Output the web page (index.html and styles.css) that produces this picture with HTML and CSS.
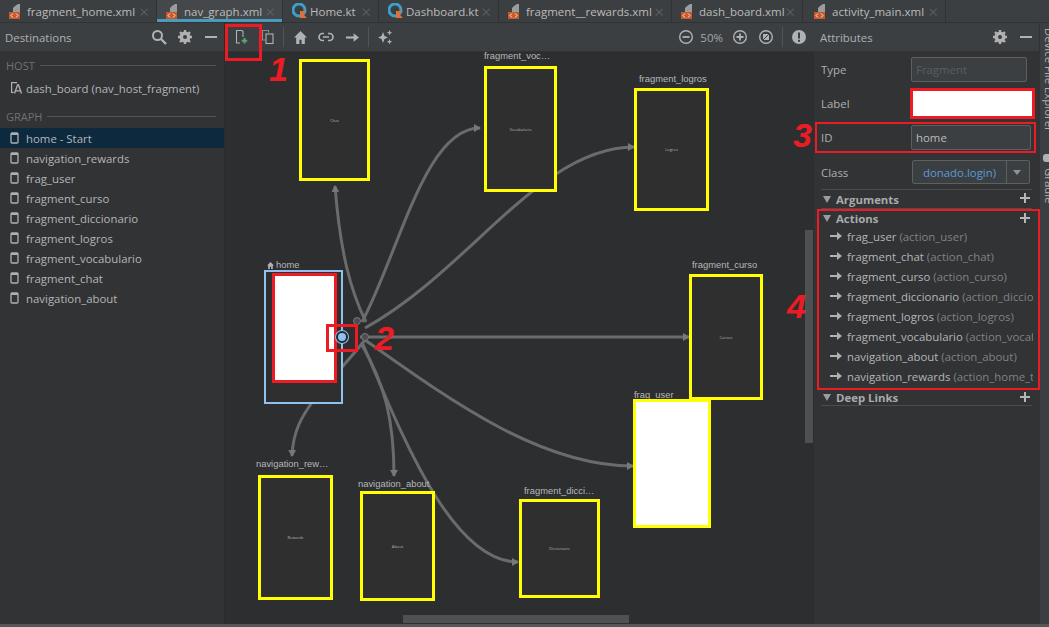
FILE: index.html
```html
<!DOCTYPE html>
<html lang="en">
<head>
    <meta charset="UTF-8">
    <title>nav_graph.xml</title>
    <link rel="stylesheet" href="styles.css">
</head>
<body>
    <svg class="icon-defs" width="0" height="0">
        <defs>
            <symbol id="xml" viewBox="0 0 16 16">
                <path d="M6 3l3-2h2v8H4V5z" fill="#9a9c9e"/>
                <rect x="0" y="9" width="11" height="7" fill="#c75a28"/>
                <path d="M4 10.500l-2 2 2 2M7 10.500l2 2-2 2" fill="none" stroke="#eee" stroke-width="1"/>
            </symbol>
            <symbol id="kt" viewBox="0 0 16 16">
                <circle cx="7" cy="7" r="6" fill="none" stroke="#3d9fc9" stroke-width="3"/>
                <path d="M8 15V8h7l-3.500 3.500L15 15z" fill="#e0703a"/>
            </symbol>
            <symbol id="screen" viewBox="0 0 10 12">
                <rect x="1" y="1" width="7" height="10" rx="1" fill="none" stroke="#aeb0b2" stroke-width="1.300"/>
                <rect x="1" y="1" width="7" height="2" fill="#aeb0b2"/>
            </symbol>
            <symbol id="gear" viewBox="0 0 16 16">
                <circle cx="8" cy="8" r="4" fill="none" stroke="#afb1b3" stroke-width="3"/>
                <path d="M8 1v14M1 8h14M3 3l10 10M13 3L3 13" stroke="#afb1b3" stroke-width="2.400"/>
                <circle cx="8" cy="8" r="2" fill="#3c3f41"/>
            </symbol>
            <symbol id="arrow" viewBox="0 0 12 10">
                <path d="M0 5h8" stroke="#afb1b3" stroke-width="2"/>
                <path d="M7 1l5 4-5 4z" fill="#afb1b3"/>
            </symbol>
            <symbol id="house" viewBox="0 0 12 12">
                <path d="M6 0l6 6h-2v6H7V8H5v4H2V6H0z" fill="#afb1b3"/>
            </symbol>
        </defs>
    </svg>

    <div class="tabs">
        <div class="tab"><svg class="tab-icon"><use href="#xml"/></svg>fragment_home.xml<span class="tab-close">×</span></div>
        <div class="tab active"><svg class="tab-icon"><use href="#xml"/></svg>nav_graph.xml<span class="tab-close">×</span></div>
        <div class="tab"><svg class="tab-icon"><use href="#kt"/></svg>Home.kt<span class="tab-close">×</span></div>
        <div class="tab"><svg class="tab-icon"><use href="#kt"/></svg>Dashboard.kt<span class="tab-close">×</span></div>
        <div class="tab"><svg class="tab-icon"><use href="#xml"/></svg>fragment__rewards.xml<span class="tab-close">×</span></div>
        <div class="tab"><svg class="tab-icon"><use href="#xml"/></svg>dash_board.xml<span class="tab-close">×</span></div>
        <div class="tab"><svg class="tab-icon"><use href="#xml"/></svg>activity_main.xml<span class="tab-close">×</span></div>
    </div>

    <div class="main">
        <aside class="destinations">
            <div class="panel-header">
                <span class="panel-title">Destinations</span>
                <div class="panel-tools">
                    <svg class="tool" viewBox="0 0 16 16"><circle cx="6.500" cy="6.500" r="4.500" fill="none" stroke="#afb1b3" stroke-width="2"/><path d="M10 10l5 5" stroke="#afb1b3" stroke-width="2.400"/></svg>
                    <svg class="tool"><use href="#gear"/></svg>
                    <svg class="tool" viewBox="0 0 16 16"><path d="M2 8h12" stroke="#afb1b3" stroke-width="2"/></svg>
                </div>
            </div>
            <div class="section-head host-head"><span>HOST</span><i></i></div>
            <div class="dest-row host-row">
                <svg class="host-icon" viewBox="0 0 12 12"><path d="M6 .6H.6v9.800h2" fill="none" stroke="#aeb0b2" stroke-width="1.200"/><path d="M3.500 11.500L6.500 3h1l3 8.500M4.800 8.800h4.500" fill="none" stroke="#aeb0b2" stroke-width="1.300"/></svg>
                dash_board (nav_host_fragment)
            </div>
            <div class="section-head graph-head"><span>GRAPH</span><i></i></div>
            <div class="dest-row selected"><svg class="row-icon"><use href="#screen"/></svg>home - Start</div>
            <div class="dest-row"><svg class="row-icon"><use href="#screen"/></svg>navigation_rewards</div>
            <div class="dest-row"><svg class="row-icon"><use href="#screen"/></svg>frag_user</div>
            <div class="dest-row"><svg class="row-icon"><use href="#screen"/></svg>fragment_curso</div>
            <div class="dest-row"><svg class="row-icon"><use href="#screen"/></svg>fragment_diccionario</div>
            <div class="dest-row"><svg class="row-icon"><use href="#screen"/></svg>fragment_logros</div>
            <div class="dest-row"><svg class="row-icon"><use href="#screen"/></svg>fragment_vocabulario</div>
            <div class="dest-row"><svg class="row-icon"><use href="#screen"/></svg>fragment_chat</div>
            <div class="dest-row"><svg class="row-icon"><use href="#screen"/></svg>navigation_about</div>
        </aside>

        <section class="editor">
            <div class="toolbar">
                <div class="tool-group">
                    <svg class="tool" viewBox="0 0 16 16"><path d="M7 14H3.500V1.500H9l1 1V8" fill="none" stroke="#afb1b3" stroke-width="1.100"/><path d="M11.500 9v5.500M8.800 11.800h5.400" stroke="#59a869" stroke-width="2"/></svg>
                    <svg class="tool" viewBox="0 0 16 16"><path d="M9.500 3.500V1.500h-6v9.500h3" fill="none" stroke="#8a8c8e" stroke-width="1.100"/><rect x="7" y="5" width="7" height="9.500" fill="none" stroke="#afb1b3" stroke-width="1.100"/></svg>
                    <i class="tool-sep"></i>
                    <svg class="tool tool-narrow"><use href="#house"/></svg>
                    <svg class="tool" viewBox="0 0 16 16"><path d="M6 4.500H4.500a3.500 3.500 0 0 0 0 7H6M10 4.500h1.500a3.500 3.500 0 0 1 0 7H10M5 8h6" fill="none" stroke="#afb1b3" stroke-width="1.700"/></svg>
                    <svg class="tool tool-narrow"><use href="#arrow"/></svg>
                    <i class="tool-sep"></i>
                    <svg class="tool" viewBox="0 0 16 16"><path d="M6 3l1.500 4L11 8.500 7.500 10 6 14l-1.500-4L1 8.500 4.500 7zM12.500 1l.8 2 2 .8-2 .8-.8 2-.8-2-2-.8 2-.8zM12.500 10l.8 2 2 .8-2 .8-.8 2-.8-2-2-.8 2-.8z" fill="#afb1b3"/></svg>
                </div>
                <div class="tool-group">
                    <svg class="tool" viewBox="0 0 16 16"><circle cx="8" cy="8" r="6.300" fill="none" stroke="#afb1b3" stroke-width="1.400"/><path d="M4.500 8h7" stroke="#afb1b3" stroke-width="1.800"/></svg>
                    <span class="zoom-value">50%</span>
                    <svg class="tool" viewBox="0 0 16 16"><circle cx="8" cy="8" r="6.300" fill="none" stroke="#afb1b3" stroke-width="1.400"/><path d="M4.500 8h7M8 4.500v7" stroke="#afb1b3" stroke-width="1.800"/></svg>
                    <svg class="tool" viewBox="0 0 16 16"><circle cx="8" cy="8" r="6.300" fill="none" stroke="#afb1b3" stroke-width="1.400"/><path d="M5 5h6v6H5z" fill="#afb1b3"/><path d="M4.500 11.500l7-7" stroke="#3c3f41" stroke-width="1"/></svg>
                    <i class="tool-sep"></i>
                    <svg class="tool" viewBox="0 0 16 16"><circle cx="8" cy="8" r="7" fill="#afb1b3"/><path d="M8 3.500v6M8 10.800v2" stroke="#3c3f41" stroke-width="2"/></svg>
                </div>
            </div>

            <div class="canvas">
                <svg class="edges" viewBox="225 52 589 575">
                    <defs>
                        <marker id="head" markerWidth="7" markerHeight="8" refX="6" refY="4" orient="auto" markerUnits="userSpaceOnUse"><path d="M0 0l7 4-7 4z" fill="#77787a"/></marker>
                    </defs>
                    <g fill="none" stroke="#6a6b6d" stroke-width="3" marker-end="url(#head)">
                        <path d="M366 322C350 290 340 250 335 186"/>
                        <path d="M362 322C400 250 425 128 480 128"/>
                        <path d="M365 328C470 270 540 147 634 147"/>
                        <path d="M360 337H689"/>
                        <path d="M365 340C450 400 540 466 633 466"/>
                        <path d="M362 342C400 430 450 562 518 562"/>
                        <path d="M362 345C385 385 394 420 394 476"/>
                        <path d="M365 340C345 365 325 385 313 401C303 415 293 430 292 456"/>
                    </g>
                    <g fill="#4b4c4e" stroke="#77787a">
                        <circle cx="357" cy="321" r="3.500"/>
                        <circle cx="365" cy="337" r="3.500"/>
                    </g>
                </svg>

                <div class="node node-chat"><span class="node-text">Chat</span></div>
                <span class="node-label label-voc">fragment_voc…</span>
                <div class="node node-voc"><span class="node-text">Vocabulario</span></div>
                <span class="node-label label-logros">fragment_logros</span>
                <div class="node node-logros"><span class="node-text">Logros</span></div>
                <span class="node-label label-curso">fragment_curso</span>
                <div class="node node-curso"><span class="node-text">Cursos</span></div>
                <span class="node-label label-user">frag_user</span>
                <div class="node node-user"></div>
                <span class="node-label label-rewards">navigation_rew…</span>
                <div class="node node-rewards"><span class="node-text">Rewards</span></div>
                <span class="node-label label-about">navigation_about</span>
                <div class="node node-about"><span class="node-text">About</span></div>
                <span class="node-label label-dicc">fragment_dicci…</span>
                <div class="node node-dicc"><span class="node-text">Diccionario</span></div>

                <span class="node-label label-home"><svg class="home-glyph"><use href="#house"/></svg>home</span>
                <div class="home-frame"></div>
                <div class="home-screen"></div>
                <div class="handle-mark"></div>
                <div class="handle"></div>

                <div class="scroll-v"></div>
                <div class="scroll-h"></div>
            </div>
        </section>

        <aside class="attributes">
            <div class="panel-header attr-header">
                <span class="panel-title">Attributes</span>
                <div class="panel-tools">
                    <svg class="tool"><use href="#gear"/></svg>
                    <svg class="tool" viewBox="0 0 16 16"><path d="M2 8h12" stroke="#afb1b3" stroke-width="2"/></svg>
                </div>
            </div>
            <div class="attr-form">
                <div class="attr-row"><label>Type</label><div class="field disabled">Fragment</div></div>
                <div class="attr-row"><label>Label</label><div class="field blank"></div></div>
                <div class="attr-row id-row"><label>ID</label><div class="field">home</div></div>
                <div class="attr-row class-row"><label>Class</label><div class="field combo"><span class="combo-value">donado.login)</span><span class="combo-arrow"></span></div></div>
            </div>
            <div class="group-head args-head"><span class="caret"></span>Arguments<span class="plus"></span></div>
            <div class="actions-box">
                <div class="group-head"><span class="caret"></span>Actions<span class="plus"></span></div>
                <div class="action"><svg class="action-arrow"><use href="#arrow"/></svg><span class="action-text">frag_user <em>(action_user)</em></span></div>
                <div class="action"><svg class="action-arrow"><use href="#arrow"/></svg><span class="action-text">fragment_chat <em>(action_chat)</em></span></div>
                <div class="action"><svg class="action-arrow"><use href="#arrow"/></svg><span class="action-text">fragment_curso <em>(action_curso)</em></span></div>
                <div class="action"><svg class="action-arrow"><use href="#arrow"/></svg><span class="action-text">fragment_diccionario <em>(action_diccionario)</em></span></div>
                <div class="action"><svg class="action-arrow"><use href="#arrow"/></svg><span class="action-text">fragment_logros <em>(action_logros)</em></span></div>
                <div class="action"><svg class="action-arrow"><use href="#arrow"/></svg><span class="action-text">fragment_vocabulario <em>(action_vocabulario)</em></span></div>
                <div class="action"><svg class="action-arrow"><use href="#arrow"/></svg><span class="action-text">navigation_about <em>(action_about)</em></span></div>
                <div class="action"><svg class="action-arrow"><use href="#arrow"/></svg><span class="action-text">navigation_rewards <em>(action_home_to_rewards)</em></span></div>
            </div>
            <div class="group-head deep-head"><span class="caret"></span>Deep Links<span class="plus"></span></div>
        </aside>

        <div class="side-strip">
            <span class="side-text">Device File Explorer</span>
            <i class="gradle-icon"></i>
            <span class="side-text gradle">Gradle</span>
        </div>
    </div>
    <div class="bottom-line"></div>

    <!-- red annotations drawn over the screenshot -->
    <div class="mark mark-add"></div>
    <span class="mark-num num-1">1</span>
    <span class="mark-num num-2">2</span>
    <span class="mark-num num-3">3</span>
    <span class="mark-num num-4">4</span>
</body>
</html>
```

FILE: styles.css
```css
* {
    box-sizing: border-box;
}

html, body {
    height: 100%;
}

body {
    margin: 0;
    position: relative;
    display: flex;
    flex-direction: column;
    overflow: hidden;
    background-color: #313335;
    color: #bbbbbb;
    font-family: "Open Sans", "Noto Sans", sans-serif;
    font-size: 11.400px;
}

.icon-defs {
    position: absolute;
}

/* tab strip */
.tabs {
    display: flex;
    height: 23px;
    flex: none;
    background-color: #3c3f41;
    border-bottom: 1px solid #323232;
}

.tab {
    display: flex;
    align-items: center;
    height: 22px;
    padding-left: 9px;
    border-right: 1px solid #323232;
    font-size: 11.500px;
    color: #bbbbbb;
    white-space: nowrap;
}

.tab:nth-child(1) { width: 157px; }
.tab:nth-child(2) { width: 126px; }
.tab:nth-child(3) { width: 96px; }
.tab:nth-child(4) { width: 120px; }
.tab:nth-child(5) { width: 173px; }
.tab:nth-child(6) { width: 131px; }
.tab:nth-child(7) { width: 143px; padding-left: 11px; }

.tab.active {
    background-color: #44484a;
    box-shadow: inset 0 -3px 0 #4a9cbd;
}

.tab-icon {
    width: 16px;
    height: 16px;
    margin-right: 2px;
    flex: none;
}

.tab-close {
    margin-left: auto;
    margin-right: 7px;
    color: #66686a;
    font-size: 17px;
    font-weight: 300;
    line-height: 1;
}

/* main area */
.main {
    flex: 1;
    display: flex;
    min-height: 0;
}

.panel-header {
    display: flex;
    align-items: center;
    justify-content: space-between;
    height: 29px;
    padding: 0 5px;
    background-color: #3c3f41;
    border-bottom: 1px solid #323232;
}

.panel-title {
    color: #aeb0b2;
}

.panel-tools {
    display: flex;
    gap: 10px;
    align-items: center;
}

.tool {
    width: 16px;
    height: 16px;
    flex: none;
}

.tool-narrow {
    width: 13px;
    height: 13px;
    margin: 0 1.500px;
}

/* destinations list */
.destinations {
    width: 225px;
    flex: none;
    border-right: 1px solid #2b2b2b;
    background-color: #313335;
}

.section-head {
    display: flex;
    align-items: center;
    gap: 5px;
    height: 18px;
    padding: 0 8px 0 6px;
    color: #6f7173;
    font-size: 11px;
}

.section-head i {
    flex: 1;
    height: 1px;
    background-color: #515355;
}

.host-head {
    margin-top: 4px;
}

.graph-head {
    margin: 8px 0 3px;
}

.dest-row {
    display: flex;
    align-items: center;
    height: 20px;
    padding-left: 26px;
    position: relative;
    color: #b4b6b8;
    white-space: nowrap;
}

.host-row {
    margin-top: 3px;
    height: 22px;
}

.selected {
    background-color: #0d293e;
}

.row-icon {
    position: absolute;
    left: 10px;
    top: 4px;
    width: 10px;
    height: 12px;
}

.host-icon {
    position: absolute;
    left: 11px;
    top: 5px;
    width: 12px;
    height: 12px;
}

/* toolbar */
.editor {
    flex: 1;
    display: flex;
    flex-direction: column;
    min-width: 0;
}

.toolbar {
    display: flex;
    align-items: center;
    justify-content: space-between;
    height: 29px;
    flex: none;
    padding: 0 7px 0 8px;
    background-color: #3c3f41;
    border-bottom: 1px solid #323232;
}

.tool-group {
    display: flex;
    align-items: center;
    gap: 10px;
}

.tool-sep {
    width: 1px;
    height: 20px;
    margin: 0 -2px;
    background-color: #515355;
}

.zoom-value {
    font-size: 11.500px;
    color: #a5a7a9;
    margin: 0 -1px 0 -4px;
}

/* graph canvas */
.canvas {
    position: relative;
    flex: 1;
    background-color: #2d2e30;
}

.edges {
    position: absolute;
    left: 0;
    top: 0;
    width: 589px;
    height: 575px;
}

.node {
    position: absolute;
    display: flex;
    align-items: center;
    justify-content: center;
    border: 3px solid #ffff00;
    background-color: #2f2f2f;
}

.node-text {
    font-size: 4px;
    color: #b5b5b5;
}

.node-chat { left: 74px; top: 7px; width: 71px; height: 122px; }
.node-voc { left: 259px; top: 14px; width: 73px; height: 126px; }
.node-logros { left: 409px; top: 36px; width: 75px; height: 123px; }
.node-curso { left: 464px; top: 222px; width: 74px; height: 126px; }
.node-user { left: 408px; top: 347px; width: 78px; height: 129px; background-color: #ffffff; }
.node-rewards { left: 33px; top: 423px; width: 75px; height: 125px; }
.node-about { left: 135px; top: 439px; width: 75px; height: 110px; }
.node-dicc { left: 294px; top: 447px; width: 81px; height: 99px; }

.node-label {
    position: absolute;
    font-family: "Liberation Sans", Arial, sans-serif;
    font-size: 9.400px;
    line-height: 12px;
    color: #b7b8b9;
    white-space: nowrap;
}

.label-voc { left: 259px; top: -2px; }
.label-logros { left: 414px; top: 21px; }
.label-curso { left: 467px; top: 207px; }
.label-user { left: 409px; top: 337px; }
.label-rewards { left: 31px; top: 406px; }
.label-about { left: 133px; top: 426px; }
.label-dicc { left: 299px; top: 433px; }
.label-home { left: 42px; top: 207px; display: flex; align-items: center; gap: 2px; }

.home-glyph {
    width: 7px;
    height: 7px;
}

.home-frame {
    position: absolute;
    left: 39px;
    top: 218px;
    width: 79px;
    height: 134px;
    border: 2px solid #8fc2f0;
    background-color: #2f2f2f;
}

.home-screen {
    position: absolute;
    left: 47px;
    top: 221px;
    width: 65px;
    height: 110px;
    border: 3px solid #ed1c24;
    background-color: #ffffff;
}

.handle-mark {
    position: absolute;
    left: 101px;
    top: 272px;
    width: 32px;
    height: 28px;
    border: 3px solid #ed1c24;
}

.handle {
    position: absolute;
    left: 111px;
    top: 279px;
    width: 12px;
    height: 12px;
    border-radius: 50%;
    background-color: #8fc2f0;
    border: 2px solid #23282c;
    box-shadow: 0 0 0 1px #8fc2f0;
}

.scroll-v {
    position: absolute;
    left: 580px;
    top: 178px;
    width: 8px;
    height: 213px;
    background-color: #4f5052;
}

.scroll-h {
    position: absolute;
    left: 178px;
    top: 563px;
    width: 226px;
    height: 8px;
    background-color: #4f5052;
}

/* attributes panel */
.attributes {
    width: 225px;
    flex: none;
    background-color: #313335;
    position: relative;
    z-index: 1;
}

.attr-header {
    padding-left: 6px;
}

.attr-row {
    display: flex;
    align-items: center;
    height: 34px;
    padding-left: 7px;
}

.attr-row label {
    width: 90px;
    flex: none;
    color: #aeb0b2;
}

.field {
    display: flex;
    align-items: center;
    width: 116px;
    height: 25px;
    padding-left: 4px;
    border: 1px solid #5e6060;
    border-radius: 2px;
    background-color: #3c3f41;
    color: #bbbbbb;
}

.field.disabled {
    color: #5b5d5f;
}

.field.blank {
    width: 125px;
    height: 31px;
    margin-left: -1px;
    border: 3px solid #ed1c24;
    border-radius: 0;
    background-color: #ffffff;
}

.id-row {
    width: 221px;
    height: 31px;
    margin: 2px 0 0 1px;
    padding-left: 4px;
    border: 2px solid #ed1c24;
}

.id-row .field {
    width: 120px;
}

.class-row {
    margin-top: 2px;
    height: 34px;
}

.combo {
    margin-left: 1px;
    width: 118px;
    height: 24px;
    padding: 0;
}

.combo-value {
    flex: 1;
    text-align: center;
    color: #5a9bd8;
}

.combo-arrow {
    width: 23px;
    height: 100%;
    position: relative;
    border-left: 1px solid #5e6060;
}

.combo-arrow::after {
    content: "";
    position: absolute;
    left: 6px;
    top: 9px;
    border-left: 4px solid transparent;
    border-right: 4px solid transparent;
    border-top: 5px solid #8f9193;
}

.group-head {
    position: relative;
    display: flex;
    align-items: center;
    height: 16px;
    margin: 0 7px;
    border-bottom: 1px solid #4a4c4e;
    font-weight: 700;
    color: #a9abad;
}

.args-head {
    height: 20px;
    border-top: 1px solid #4a4c4e;
}

.caret {
    width: 0;
    height: 0;
    margin: 0 5px 0 2px;
    border-left: 4px solid transparent;
    border-right: 4px solid transparent;
    border-top: 7px solid #9a9c9e;
}

.plus {
    position: absolute;
    right: 2px;
    top: 50%;
    width: 10px;
    height: 10px;
    margin-top: -6px;
    background:
        linear-gradient(#b5b7b9, #b5b7b9) center / 10px 2px no-repeat,
        linear-gradient(#b5b7b9, #b5b7b9) center / 2px 10px no-repeat;
}

.actions-box {
    width: 223px;
    height: 181px;
    margin-left: 3px;
    border: 2px solid #ed1c24;
}

.actions-box .group-head {
    height: 15px;
    margin: 0 0 0 2px;
    border-bottom: none;
}

.actions-box .plus {
    right: 8px;
}

.action {
    display: flex;
    align-items: center;
    height: 20px;
    padding-left: 11px;
    color: #b4b6b8;
    white-space: nowrap;
    overflow: hidden;
}

.action-arrow {
    width: 12px;
    height: 10px;
    flex: none;
    margin-right: 5px;
}

.action-text {
    overflow: hidden;
    width: 186px;
}

.action em {
    font-style: normal;
    color: #808284;
}

/* tool window strip */
.side-strip {
    width: 10px;
    flex: none;
    background-color: #3c3f41;
    border-left: 1px solid #323232;
    overflow: hidden;
    position: relative;
}

.side-text {
    position: absolute;
    left: 2px;
    top: 5px;
    writing-mode: vertical-rl;
    color: #aeb0b2;
    white-space: nowrap;
}

.side-text.gradle {
    top: 145px;
}

.gradle-icon {
    position: absolute;
    left: 3px;
    top: 131px;
    width: 8px;
    height: 8px;
    border-radius: 3px;
    background-color: #afb1b3;
}

.bottom-line {
    height: 3px;
    flex: none;
    background-color: #555657;
}

/* annotations */
.mark {
    position: absolute;
    border: 3px solid #ed1c24;
}

.mark-add {
    left: 225px;
    top: 24px;
    width: 37px;
    height: 37px;
}

.mark-num {
    position: absolute;
    font-family: "Liberation Sans", Arial, sans-serif;
    font-size: 34px;
    font-weight: 700;
    font-style: italic;
    line-height: 34px;
    color: #ed1c24;
}

.num-1 { left: 269px; top: 52px; }
.num-2 { left: 375px; top: 321px; }
.num-3 { left: 793px; top: 118px; }
.num-4 { left: 787px; top: 289px; }
```
